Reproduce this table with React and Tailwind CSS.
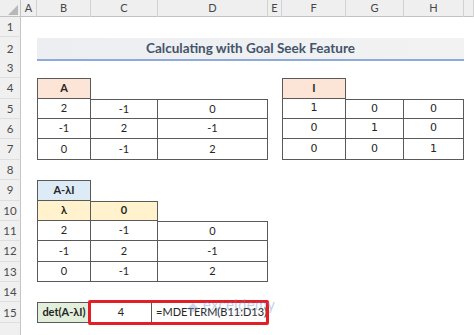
import React from 'react';

const COLS = 'grid grid-cols-[21px_16px_54px_67px_110px_14px_64px_58px_60px_1fr]';

const SIDES = {
  t: 'border-t',
  l: 'border-l',
  r: 'border-r',
  b: 'border-b',
};

// one bordered spreadsheet cell
function Cell({ v, sides = '', className = '' }) {
  const borders = sides
    .split('')
    .map((s) => SIDES[s])
    .join(' ');
  return (
    <div className={`flex items-center justify-center border-[#5a5a5a] text-[11px] text-[#262626] ${borders} ${className}`}>
      {v}
    </div>
  );
}

function RowNum({ n }) {
  return (
    <div className="flex items-center justify-center bg-[#f0f0f0] border-r border-b border-r-[#c4c4c4] border-b-[#dedede] text-[11.5px] text-[#4a4a4a]">
      {n}
    </div>
  );
}

function Row({ n, children, h = 'h-[20.4px]' }) {
  return (
    <div className={`${COLS} ${h}`}>
      <RowNum n={n} />
      {children}
    </div>
  );
}

const Blank = () => <div />;

function ColHeader() {
  const letters = ['A', 'B', 'C', 'D', 'E', 'F', 'G', 'H', ''];
  return (
    <div className={`${COLS} h-[17px] bg-[#efefef] border-b border-[#c2c2c2]`}>
      <div className="relative border-r border-[#c4c4c4]">
        <div className="absolute right-[2px] bottom-[2px] w-0 h-0 border-l-[10px] border-l-transparent border-b-[10px] border-b-[#b8b8b8]" />
      </div>
      {letters.map((l, i) => (
        <div key={i} className="flex items-center justify-center border-r border-[#d2d2d2] text-[11px] text-[#474747]">
          {l}
        </div>
      ))}
    </div>
  );
}

export default function App() {
  const peach = 'bg-[#fce4d6] font-bold';
  const iNum = 'font-["DejaVu_Sans",sans-serif] text-[10.5px]';

  return (
    <div className="w-[474px] h-[335px] overflow-hidden bg-white font-['Lato','Open_Sans',sans-serif] relative">
      <ColHeader />
      <Row n={1}>{Array.from({ length: 9 }, (_, i) => <Blank key={i} />)}</Row>
      <Row n={2}>
        <Blank />
        <div className="col-span-7 flex items-center justify-center bg-gradient-to-r from-[#eceef2] to-[#f2f2f2] border-b-2 border-[#8eaadb] mt-[1px] text-[13.5px] font-bold text-[#44546a]">
          Calculating with Goal Seek Feature
        </div>
        <Blank />
      </Row>
      <Row n={3}>{Array.from({ length: 9 }, (_, i) => <Blank key={i} />)}</Row>
      <Row n={4}>
        <Blank />
        <Cell v="A" sides="tlrb" className={peach} />
        <Blank />
        <Blank />
        <Blank />
        <Cell v="I" sides="tlrb" className={peach} />
        <Blank />
        <Blank />
        <Blank />
      </Row>
      {[
        [['2', '-1', '0'], ['1', '0', '0']],
        [['-1', '2', '-1'], ['0', '1', '0']],
        [['0', '-1', '2'], ['0', '0', '1']],
      ].map(([a, id], r) => (
        <Row key={r} n={5 + r}>
          <Blank />
          <Cell v={a[0]} sides="lrb" />
          <Cell v={a[1]} sides={r === 0 ? 'trb' : 'rb'} />
          <Cell v={a[2]} sides={r === 0 ? 'trb' : 'rb'} />
          <Blank />
          <Cell v={id[0]} sides="lrb" className={iNum} />
          <Cell v={id[1]} sides={r === 0 ? 'trb' : 'rb'} className={iNum} />
          <Cell v={id[2]} sides={r === 0 ? 'trb' : 'rb'} className={iNum} />
          <Blank />
        </Row>
      ))}
      <Row n={8}>{Array.from({ length: 9 }, (_, i) => <Blank key={i} />)}</Row>
      <Row n={9}>
        <Blank />
        <Cell v="A-λI" sides="tlrb" className="bg-[#ddebf7] font-bold" />
        {Array.from({ length: 7 }, (_, i) => <Blank key={i} />)}
      </Row>
      <Row n={10}>
        <Blank />
        <Cell v="λ" sides="lrb" className="bg-[#fff2cc] font-bold" />
        <Cell v="0" sides="trb" className="bg-[#fff2cc] font-bold" />
        {Array.from({ length: 6 }, (_, i) => <Blank key={i} />)}
      </Row>
      {[
        ['2', '-1', '0'],
        ['-1', '2', '-1'],
        ['0', '-1', '2'],
      ].map((a, r) => (
        <Row key={r} n={11 + r}>
          <Blank />
          <Cell v={a[0]} sides="lrb" />
          <Cell v={a[1]} sides="rb" />
          <Cell v={a[2]} sides={r === 0 ? 'trb' : 'rb'} />
          {Array.from({ length: 5 }, (_, i) => <Blank key={i} />)}
        </Row>
      ))}
      <Row n={14}>{Array.from({ length: 9 }, (_, i) => <Blank key={i} />)}</Row>
      <Row n={15}>
        <Blank />
        <Cell v="det(A-λI)" sides="tlrb" className="bg-[#e2efda] font-bold text-[11.5px]" />
        <div className="col-span-2 relative flex border-t border-b border-r border-[#5a5a5a]">
          <div className="w-[67px] flex items-center justify-center border-r border-[#5a5a5a] text-[11px] text-[#262626]">
            4
          </div>
          <div className="flex-1 flex items-center pl-[4px] text-[11px] text-[#262626]">
            =MDETERM(B11:D13)
          </div>
          <div className="absolute -left-[3px] -top-[3px] -right-[2px] -bottom-[3px] border-[3px] border-[#e41e26] rounded-[2px]" />
        </div>
        {Array.from({ length: 5 }, (_, i) => <Blank key={i} />)}
      </Row>
      <Row n="">{Array.from({ length: 9 }, (_, i) => <Blank key={i} />)}</Row>

      {/* faint watermark */}
      <div className="absolute left-[186px] top-[297px] flex items-center gap-[3px] opacity-40 pointer-events-none">
        <svg width="14" height="12" viewBox="0 0 14 12">
          <path d="M1 8 L7 2 L13 8 L7 11 Z" fill="#7f9fcf" />
        </svg>
        <div className="flex flex-col leading-none">
          <span className="text-[15px] text-[#6d8fc7] tracking-[0.3px]">exceldemy</span>
          <span className="text-[5px] text-[#8aa2c8] tracking-[1px]">EXCEL · DATA · BI</span>
        </div>
      </div>
    </div>
  );
}
